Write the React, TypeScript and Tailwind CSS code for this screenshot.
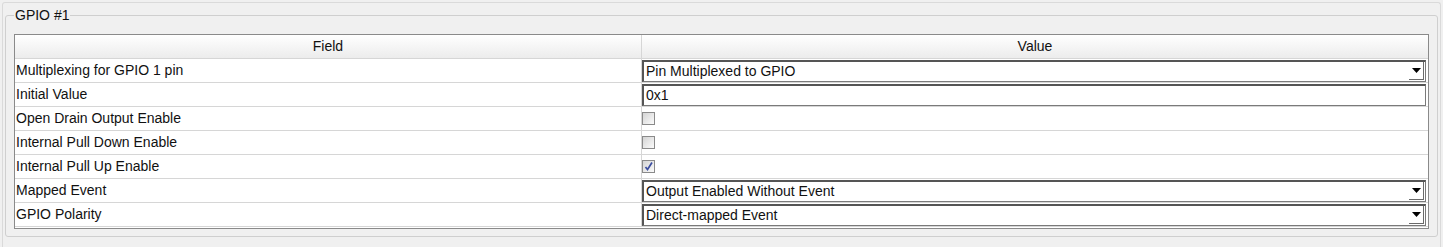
import React from "react";

type Row = {
  field: string;
  kind: "select" | "text" | "check";
  value?: string;
  checked?: boolean;
};

const rows: Row[] = [
  { field: "Multiplexing for GPIO 1 pin", kind: "select", value: "Pin Multiplexed to GPIO" },
  { field: "Initial Value", kind: "text", value: "0x1" },
  { field: "Open Drain Output Enable", kind: "check", checked: false },
  { field: "Internal Pull Down Enable", kind: "check", checked: false },
  { field: "Internal Pull Up Enable", kind: "check", checked: true },
  { field: "Mapped Event", kind: "select", value: "Output Enabled Without Event" },
  { field: "GPIO Polarity", kind: "select", value: "Direct-mapped Event" },
];

function Select({ value }: { value: string }) {
  return (
    <div className="relative h-[22px] w-[784px] bg-white border border-[#7a7a7a] border-l-[2px] border-t-[2px] border-l-[#555] border-t-[#555] pl-[2px] leading-[19px]">
      {value}
      <div className="absolute right-[1px] top-0 bottom-[1px] w-[15px] border-r border-b border-[#6a6a6a] flex items-center justify-center">
        <svg width="9" height="5" viewBox="0 0 9 5">
          <path d="M0 0h9L4.5 5z" fill="#000" />
        </svg>
      </div>
    </div>
  );
}

function TextBox({ value }: { value: string }) {
  return (
    <div className="h-[22px] w-[784px] bg-white border border-[#7a7a7a] border-l-[2px] border-t-[2px] border-l-[#555] border-t-[#555] pl-[2px] leading-[19px]">
      {value}
    </div>
  );
}

function Check({ checked }: { checked?: boolean }) {
  return (
    <div className="w-[13px] h-[13px] border border-[#8a8a8a] bg-gradient-to-br from-[#d4d4d4] to-[#fbfbfb] flex items-center justify-center">
      {checked && (
        <svg width="11" height="11" viewBox="0 0 11 11">
          <path d="M2.5 6 L4.5 8.5 L9 1.5" fill="none" stroke="#3c4ea0" strokeWidth="1.7" />
        </svg>
      )}
    </div>
  );
}

export default function App() {
  return (
    <div className="w-[1443px] h-[247px] bg-[#f0f0f0] pt-[2px] px-[2px] font-['Liberation_Sans',Arial,sans-serif] text-[14px] text-[#111]">
      <div className="h-[245px] border-t border-x border-[#dadada] rounded-t-[3px] pt-[5px] px-[2px]">
        <fieldset className="w-[1431px] h-[229px] border border-[#cfcfcf] rounded-[3px] px-[8px]">
          <legend className="px-[1px] text-[#111] leading-[15px]">GPIO #1</legend>
          <div className="mt-[11px] w-[1415px] bg-white border border-[#8a8a8a]">
            <div className="grid grid-cols-[627px_1fr] h-[24px] bg-gradient-to-b from-white to-[#ececec] border-b border-[#d6d6d6]">
              <div className="flex items-center justify-center border-r border-[#d6d6d6]">Field</div>
              <div className="flex items-center justify-center">Value</div>
            </div>
            {rows.map((r) => (
              <div key={r.field} className="grid grid-cols-[627px_1fr] h-[24px] border-b border-[#d6d6d6]">
                <div className="flex items-center pl-[1px] border-r border-[#d6d6d6]">{r.field}</div>
                <div className="flex items-center">
                  {r.kind === "select" && <Select value={r.value!} />}
                  {r.kind === "text" && <TextBox value={r.value!} />}
                  {r.kind === "check" && <Check checked={r.checked} />}
                </div>
              </div>
            ))}
            <div className="h-[1px]" />
          </div>
        </fieldset>
      </div>
    </div>
  );
}
